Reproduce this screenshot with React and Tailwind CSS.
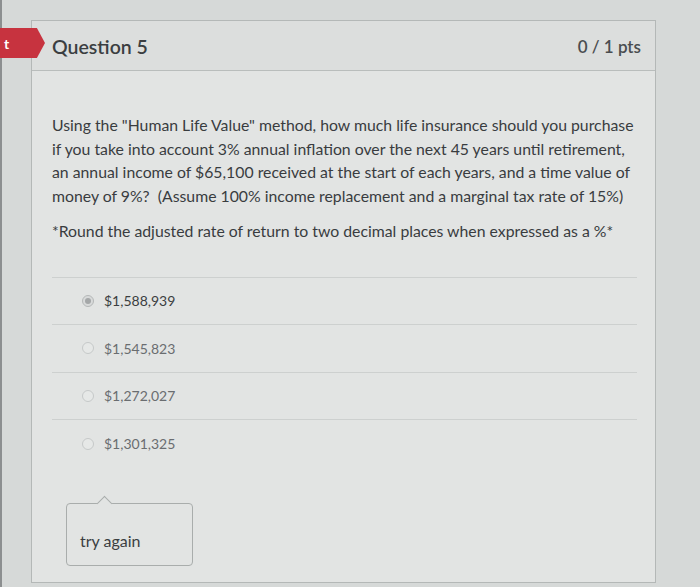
import React from "react";

const options = [
  { label: "$1,588,939", picked: true },
  { label: "$1,545,823", picked: false },
  { label: "$1,272,027", picked: false },
  { label: "$1,301,325", picked: false },
];

const questionLines = [
  'Using the "Human Life Value" method, how much life insurance should you purchase',
  "if you take into account 3% annual inflation over the next 45 years until retirement,",
  "an annual income of $65,100 received at the start of each years, and a time value of",
  "money of 9%?\u00a0 (Assume 100% income replacement and a marginal tax rate of 15%)",
];

export default function App() {
  return (
    <div className="relative w-[700px] h-[587px] overflow-hidden bg-[#d6d9d8] font-['Lato','Liberation_Sans',sans-serif] text-[#393c3f] flex">
      {/* left edge of the window */}
      <div className="w-[2px] h-full bg-[#8c8f90]" />

      {/* red flag */}
      <div className="absolute left-0 top-[28px] h-[30px] w-[45px] bg-[#c7333f] [clip-path:polygon(0_0,82%_0,100%_50%,82%_100%,0_100%)] flex items-center pl-[4px]">
        <span className="text-white text-[14px] font-bold">t</span>
      </div>

      {/* question card */}
      <div className="ml-[29px] mt-[20px] w-[625px] h-[563px] border border-[#b4b8b7] bg-[#e2e4e3] flex flex-col">
        <div className="h-[50px] shrink-0 bg-[#dcdedd] border-b border-[#b9bdbc] flex items-center justify-between pl-[20px] pr-[14px]">
          <span className="text-[19.5px] font-semibold text-[#3b3e41] mt-[2px]">Question 5</span>
          <span className="text-[17px] font-semibold text-[#4a4d50] mt-[2px]">0 / 1 pts</span>
        </div>

        <div className="pl-[20px] pt-[42px]">
          <p className="text-[15.8px] leading-[23.5px] whitespace-nowrap">
            {questionLines.map((line, i) => (
              <React.Fragment key={i}>
                {line}
                {i < questionLines.length - 1 && <br />}
              </React.Fragment>
            ))}
          </p>
          <p className="mt-[12px] text-[15.8px] leading-[23.5px]">
            *Round the adjusted rate of return to two decimal places when expressed as a %*
          </p>

          <div className="mt-[34px] w-[585px] border-t border-[#cdd0cf]">
            {options.map((o, i) => (
              <div
                key={o.label}
                className={
                  "h-[47.5px] flex items-center pl-[30px] " +
                  (i < options.length - 1 ? "border-b border-[#cdd0cf]" : "")
                }
              >
                {o.picked ? (
                  <span className="w-[12px] h-[12px] rounded-full border border-[#b5b8b8] bg-[#d8dada] flex items-center justify-center">
                    <span className="w-[6px] h-[6px] rounded-full bg-[#a4a7a8]" />
                  </span>
                ) : (
                  <span className="w-[12px] h-[12px] rounded-full border border-[#c6c9c9] bg-[#e6e8e7]" />
                )}
                <span
                  className={
                    "ml-[10px] text-[14px] " +
                    (o.picked ? "text-[#3b3e41]" : "text-[#6a6d70]")
                  }
                >
                  {o.label}
                </span>
              </div>
            ))}
          </div>

          {/* feedback bubble */}
          <div className="relative mt-[35px] ml-[14px] w-[127px] h-[63px] rounded-[4px] border border-[#a9adac] bg-[#e2e4e3] pl-[13px] pt-[25px]">
            <span className="absolute left-[32px] top-[-6px] w-[11px] h-[11px] rotate-45 border-l border-t border-[#a9adac] bg-[#e2e4e3]" />
            <span className="text-[16px] text-[#3b3e41]">try again</span>
          </div>
        </div>
      </div>
    </div>
  );
}
